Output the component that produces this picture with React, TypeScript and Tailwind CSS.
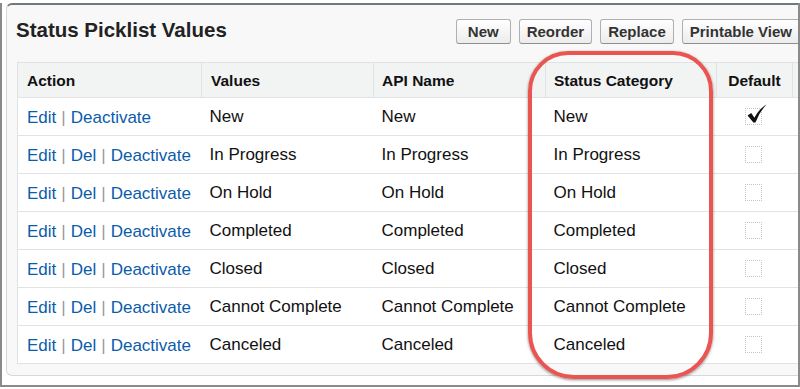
import React from 'react';

const rows = [
  { value: 'New', api: 'New', category: 'New', canDelete: false, isDefault: true },
  { value: 'In Progress', api: 'In Progress', category: 'In Progress', canDelete: true, isDefault: false },
  { value: 'On Hold', api: 'On Hold', category: 'On Hold', canDelete: true, isDefault: false },
  { value: 'Completed', api: 'Completed', category: 'Completed', canDelete: true, isDefault: false },
  { value: 'Closed', api: 'Closed', category: 'Closed', canDelete: true, isDefault: false },
  { value: 'Cannot Complete', api: 'Cannot Complete', category: 'Cannot Complete', canDelete: true, isDefault: false },
  { value: 'Canceled', api: 'Canceled', category: 'Canceled', canDelete: true, isDefault: false },
];

const Sep = () => <span className="text-[#999] px-[5px]">|</span>;

const Checkbox = ({ checked }: { checked: boolean }) => (
  <div className="relative w-[17px] h-[17px] border border-dotted border-[#c4c4c4]">
    {checked && (
      <svg viewBox="0 0 20 20" className="absolute left-[0px] top-[-5px] w-[21px] h-[21px]">
        <path d="M1.5 11 L5 8.5 L8 13 Q12 5 19.5 0.5 Q12.5 8 9 17.5 L7 17.5 Z" fill="#111" />
      </svg>
    )}
  </div>
);

const Btn = ({ label, wide }: { label: string; wide?: boolean }) => (
  <button
    className={
      wide
        ? 'h-[25px] px-[11px] rounded-[3px] border border-[#b0b0b0] border-b-[#8f8f8f] bg-gradient-to-b from-white to-[#ececec] text-[15px] font-bold text-[#333] leading-none'
        : 'h-[25px] px-[7px] rounded-[3px] border border-[#b0b0b0] border-b-[#8f8f8f] bg-gradient-to-b from-white to-[#ececec] text-[15px] font-bold text-[#333] leading-none'
    }
  >
    {label}
  </button>
);

export default function App() {
  return (
    <div className="relative w-[800px] h-[389px] bg-white pt-[3px] overflow-hidden" style={{ fontFamily: '"Liberation Sans", Arial, sans-serif' }}>
      <div className="h-[384px] border-x-2 border-b-2 border-[#8a8a8a] bg-white overflow-hidden">
        <div className="ml-[4px] w-[820px] h-[373px] rounded-[6px] border border-[#d8d8d8] border-t-2 border-t-[#6f7780] bg-[#f8f8f8] pl-[10px]">
          <div className="flex items-center h-[57px] pr-[24px]">
            <h2 className="text-[20.5px] font-bold text-[#222] -ml-[1px] pb-[6px]">Status Picklist Values</h2>
            <div className="ml-auto flex gap-[8px] pb-[4px] mr-[1px]">
              <Btn label="New" wide />
              <Btn label="Reorder" />
              <Btn label="Replace" />
              <Btn label="Printable View" />
            </div>
          </div>
          <table className="border-collapse bg-white text-[17px] text-[#111] border border-[#e0e3e5] table-fixed w-[810px]">
            <colgroup>
              <col className="w-[184px]" />
              <col className="w-[172px]" />
              <col className="w-[172px]" />
              <col className="w-[171px]" />
              <col className="w-[76px]" />
              <col />
            </colgroup>
            <thead>
              <tr className="h-[35px] bg-[#f2f3f3] text-[15.5px] font-bold text-[#111]">
                <th className="text-left pl-[9px] pt-[1px] border-r border-[#e0e3e5]">Action</th>
                <th className="text-left pl-[9px] pt-[1px] border-r border-[#e0e3e5]">Values</th>
                <th className="text-left pl-[8px] pt-[1px] border-r border-[#e0e3e5]">API Name</th>
                <th className="text-left pl-[8px] pt-[1px] border-r border-[#e0e3e5]">Status Category</th>
                <th className="text-center pt-[1px] border-r border-[#e0e3e5]">Default</th>
                <th></th>
              </tr>
            </thead>
            <tbody>
              {rows.map((r) => (
                <tr key={r.value} className="h-[38px] border-t border-[#e3e3e3]">
                  <td className="pl-[9px] pt-[2px] text-[#0b5cab] whitespace-nowrap">
                    <a>Edit</a>
                    <Sep />
                    {r.canDelete && (
                      <>
                        <a>Del</a>
                        <Sep />
                      </>
                    )}
                    <a>Deactivate</a>
                  </td>
                  <td className="pl-[8px]">{r.value}</td>
                  <td className="pl-[8px]">{r.api}</td>
                  <td className="pl-[8px]">{r.category}</td>
                  <td>
                    <div className="flex justify-center pr-[2px]">
                      <Checkbox checked={r.isDefault} />
                    </div>
                  </td>
                  <td></td>
                </tr>
              ))}
            </tbody>
          </table>
        </div>
      </div>
      <div className="absolute left-[528px] top-[51px] w-[185px] h-[328px] rounded-t-[40px] rounded-b-[46px] border-[4px] border-[#ea5552] shadow-[0_1px_3px_rgba(0,0,0,0.45)]" />
    </div>
  );
}
